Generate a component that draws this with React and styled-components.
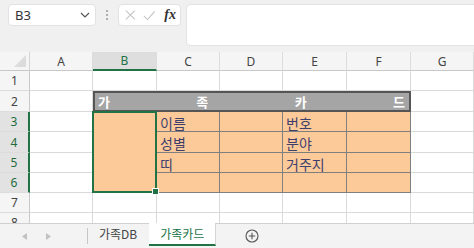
import React from "react";
import styled, { createGlobalStyle } from "styled-components";

const GlobalStyle = createGlobalStyle`
  html, body {
    margin: 0;
    padding: 0;
    background: #ffffff;
  }
  body {
    font-family: "Noto Sans", "Noto Sans CJK KR", sans-serif;
  }
  * {
    box-sizing: border-box;
  }
`;

const COLS = ["A", "B", "C", "D", "E", "F", "G"];
const GREEN = "#217346";
const GRID = "#dadada";

const Window = styled.div`
  width: 474px;
  height: 248px;
  overflow: hidden;
  display: flex;
  flex-direction: column;
  background: #f3f3f3;
`;

const Toolbar = styled.div`
  height: 52px;
  flex: none;
  display: flex;
  align-items: flex-start;
  padding: 4px 0 0 8px;
  background: #f0f0f0;
`;

const NameBox = styled.div`
  width: 88px;
  height: 22px;
  display: flex;
  align-items: center;
  justify-content: space-between;
  padding: 0 5px 0 6px;
  background: #fff;
  border: 1px solid #e2e2e2;
  border-radius: 4px;
  font-family: "Noto Sans", "Open Sans", sans-serif;
  font-size: 13px;
  color: #333;
`;

const Grip = styled.div`
  width: 10px;
  height: 22px;
  margin: 0 6px 0 6px;
  display: flex;
  flex-direction: column;
  align-items: center;
  justify-content: center;
  gap: 2px;
  span {
    width: 2px;
    height: 2px;
    border-radius: 1px;
    background: #9a9a9a;
  }
`;

const FxBox = styled.div`
  width: 63px;
  height: 22px;
  display: flex;
  align-items: center;
  gap: 7px;
  padding: 0 4px 0 6px;
  background: #fff;
  border: 1px solid #e2e2e2;
  border-radius: 4px;
`;

const Fx = styled.span`
  font-family: "Liberation Serif", serif;
  font-style: italic;
  font-weight: 700;
  font-size: 14px;
  color: #333;
  margin-left: 2px;
`;

const FormulaInput = styled.div`
  flex: 1;
  height: 42px;
  margin-left: 5px;
  margin-right: -6px;
  background: #fff;
  border: 1px solid #e2e2e2;
  border-radius: 4px;
`;

const Sheet = styled.div`
  height: 171px;
  flex: none;
  overflow: hidden;
  display: grid;
  grid-template-columns: 30px 63px 64px 63px 63px 64px 64px 63px;
  grid-template-rows: 19px 20px 21px 20px 21px 20px 20px 20px 20px;
  background: #fff;
`;

const Corner = styled.div`
  position: relative;
  background: #f5f5f5;
  border-right: 1px solid #d4d4d4;
  border-bottom: 1px solid #c8c8c8;
  &::after {
    content: "";
    position: absolute;
    right: 3px;
    bottom: 3px;
    width: 0;
    height: 0;
    border-left: 12px solid transparent;
    border-bottom: 12px solid #dcdcdc;
  }
`;

const ColHeader = styled.div`
  display: flex;
  align-items: center;
  justify-content: center;
  font-family: "Noto Sans", "Open Sans", sans-serif;
  font-size: 12px;
  color: ${(p) => (p.$active ? GREEN : "#444")};
  background: ${(p) => (p.$active ? "#dedede" : "#f5f5f5")};
  border-right: 1px solid #dcdcdc;
  border-bottom: ${(p) => (p.$active ? `2px solid ${GREEN}` : "1px solid #c8c8c8")};
`;

const RowHeader = styled.div`
  display: flex;
  align-items: center;
  justify-content: center;
  font-family: "Noto Sans", "Open Sans", sans-serif;
  font-size: 12px;
  color: ${(p) => (p.$active ? "#1f6b40" : "#444")};
  background: ${(p) => (p.$active ? "#e2e2e2" : "#f5f5f5")};
  border-bottom: 1px solid #dcdcdc;
  border-right: ${(p) => (p.$active ? `2px solid ${GREEN}` : "1px solid #c8c8c8")};
`;

const Cell = styled.div`
  display: flex;
  align-items: center;
  padding: 2px 0 0 3px;
  font-family: "Noto Sans CJK KR", "Noto Sans", sans-serif;
  font-size: 14px;
  line-height: 1;
  color: #3f3f6e;
  white-space: nowrap;
  background: ${(p) => (p.$input ? "#fcca98" : "#fff")};
  border-right: 1px solid ${(p) => (p.$input ? "#7f7f7f" : GRID)};
  border-bottom: 1px solid ${(p) => (p.$input ? "#7f7f7f" : GRID)};
`;

const TitleBar = styled.div`
  grid-column: span 5;
  display: flex;
  align-items: center;
  justify-content: space-between;
  padding: 0 4px 0 3px;
  background: #a5a5a5;
  border: 2px solid #555;
  font-family: "Noto Sans CJK KR", sans-serif;
  font-size: 13px;
  font-weight: 700;
  color: #fff;
`;

const SelectedMerge = styled.div`
  grid-row: span ${(p) => p.$rows};
  position: relative;
  background: #fcca98;
  border: 2px solid ${GREEN};
  margin: -1px 0 0 -1px;
  &::after {
    content: "";
    position: absolute;
    right: -4px;
    bottom: -4px;
    width: 5px;
    height: 5px;
    background: ${GREEN};
    border: 1px solid #fff;
  }
`;

const TabBar = styled.div`
  flex: 1;
  display: flex;
  align-items: stretch;
  background: #f3f3f3;
  border-top: 1px solid #d0d0d0;
`;

const NavArrows = styled.div`
  width: 88px;
  display: flex;
  align-items: center;
  padding-left: 22px;
  gap: 19px;
  border-right: 1px solid #c6c6c6;
  margin: 4px 0 4px 0;
`;

const Tab = styled.div`
  padding: 0 11px;
  display: flex;
  align-items: center;
  font-family: "Noto Sans CJK KR", "Noto Sans", sans-serif;
  font-size: 12px;
  color: ${(p) => (p.$active ? GREEN : "#444")};
  background: ${(p) => (p.$active ? "#fff" : "transparent")};
  border-bottom: 2px solid ${(p) => (p.$active ? GREEN : "transparent")};
  border-right: 1px solid ${(p) => (p.$active ? "#d4d4d4" : "transparent")};
  margin-bottom: 2px;
  margin-top: -1px;
`;

const AddSheet = styled.div`
  display: flex;
  align-items: center;
  padding-left: 29px;
`;

const Chevron = () => (
  <svg width="10" height="6" viewBox="0 0 10 6">
    <polyline points="1,1 5,5 9,1" fill="none" stroke="#555" strokeWidth="1.2" />
  </svg>
);

const Cross = () => (
  <svg width="12" height="12" viewBox="0 0 12 12">
    <path d="M1 1 L11 11 M11 1 L1 11" stroke="#c4c4c4" strokeWidth="1.2" fill="none" />
  </svg>
);

const Check = () => (
  <svg width="14" height="11" viewBox="0 0 14 11">
    <polyline points="1,6 5,10 13,1" fill="none" stroke="#c4c4c4" strokeWidth="1.2" />
  </svg>
);

const Tri = ({ dir }) => (
  <svg width="5" height="7" viewBox="0 0 5 7">
    {dir === "left" ? (
      <polygon points="5,0 0,3.5 5,7" fill="#c2c2c2" />
    ) : (
      <polygon points="0,0 5,3.5 0,7" fill="#c2c2c2" />
    )}
  </svg>
);

const PlusCircle = () => (
  <svg width="14" height="14" viewBox="0 0 14 14">
    <circle cx="7" cy="7" r="6" fill="none" stroke="#555" strokeWidth="1.1" />
    <path d="M7 3.8 V10.2 M3.8 7 H10.2" stroke="#555" strokeWidth="1.1" />
  </svg>
);

// 입력 셀 내용 (행 3~6, 열 C~F)
const inputRows = [
  ["이름", "", "번호", ""],
  ["성별", "", "분야", ""],
  ["띠", "", "거주지", ""],
  ["", "", "", ""],
];

const App = () => {
  return (
    <>
      <GlobalStyle />
      <Window>
        <Toolbar>
          <NameBox>
            <span>B3</span>
            <Chevron />
          </NameBox>
          <Grip>
            <span />
            <span />
            <span />
          </Grip>
          <FxBox>
            <Cross />
            <Check />
            <Fx>fx</Fx>
          </FxBox>
          <FormulaInput />
        </Toolbar>

        <Sheet>
          <Corner />
          {COLS.map((c) => (
            <ColHeader key={c} $active={c === "B"}>{c}</ColHeader>
          ))}

          <RowHeader>1</RowHeader>
          {COLS.map((c) => <Cell key={"1" + c} />)}

          <RowHeader>2</RowHeader>
          <Cell />
          <TitleBar>
            <span>가</span>
            <span>족</span>
            <span>카</span>
            <span>드</span>
          </TitleBar>
          <Cell />

          {inputRows.map((row, i) => (
            <React.Fragment key={"r" + i}>
              <RowHeader $active>{i + 3}</RowHeader>
              <Cell />
              {i === 0 && <SelectedMerge $rows={4} />}
              {row.map((text, j) => (
                <Cell key={j} $input>{text}</Cell>
              ))}
              <Cell />
            </React.Fragment>
          ))}

          {[7, 8].map((n) => (
            <React.Fragment key={"r" + n}>
              <RowHeader>{n}</RowHeader>
              {COLS.map((c) => <Cell key={n + c} />)}
            </React.Fragment>
          ))}
        </Sheet>

        <TabBar>
          <NavArrows>
            <Tri dir="left" />
            <Tri dir="right" />
          </NavArrows>
          <Tab>가족DB</Tab>
          <Tab $active>가족카드</Tab>
          <AddSheet>
            <PlusCircle />
          </AddSheet>
        </TabBar>
      </Window>
    </>
  );
};

export default App;
